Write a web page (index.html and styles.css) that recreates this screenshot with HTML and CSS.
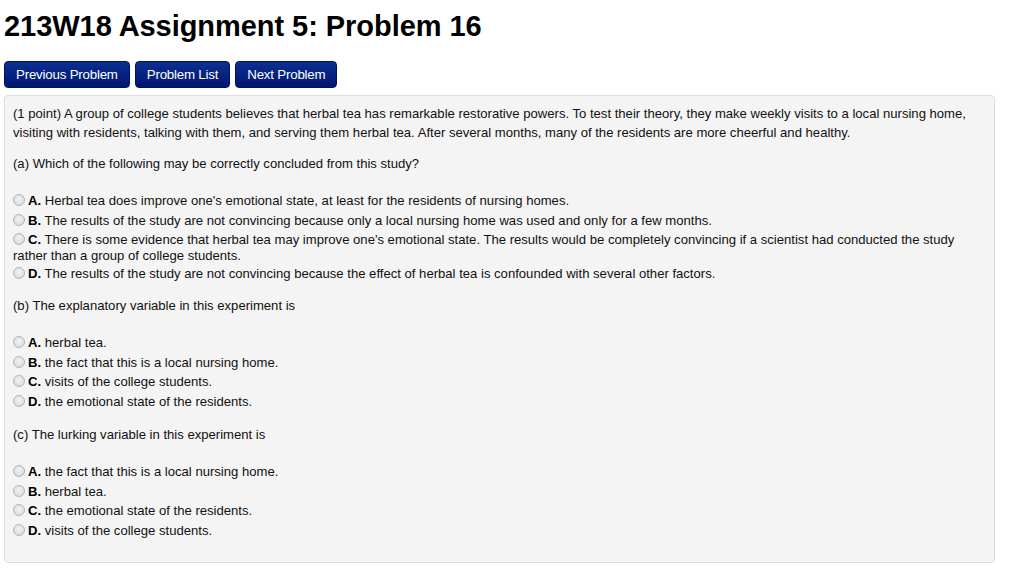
FILE: index.html
```html
<!DOCTYPE html>
<html>
<head>
<meta charset="utf-8">
<link rel="stylesheet" href="styles.css">
</head>
<body>
<h1 class="title">213W18 Assignment 5: Problem 16</h1>
<div class="nav">
  <a class="btn">Previous Problem</a>
  <a class="btn">Problem List</a>
  <a class="btn">Next Problem</a>
</div>
<div class="panel">
  <p class="intro">(1 point) A group of college students believes that herbal tea has remarkable restorative powers. To test their theory, they make weekly visits to a local nursing home, visiting with residents, talking with them, and serving them herbal tea. After several months, many of the residents are more cheerful and healthy.</p>
  <p class="q">(a) Which of the following may be correctly concluded from this study?</p>
  <div class="opts">
    <div class="opt"><span class="radio"></span><b>A.</b> Herbal tea does improve one's emotional state, at least for the residents of nursing homes.</div>
    <div class="opt"><span class="radio"></span><b>B.</b> The results of the study are not convincing because only a local nursing home was used and only for a few months.</div>
    <div class="opt long"><span class="radio"></span><b>C.</b> There is some evidence that herbal tea may improve one's emotional state. The results would be completely convincing if a scientist had conducted the study rather than a group of college students.</div>
    <div class="opt"><span class="radio"></span><b>D.</b> The results of the study are not convincing because the effect of herbal tea is confounded with several other factors.</div>
  </div>
  <p class="q">(b) The explanatory variable in this experiment is</p>
  <div class="opts mid">
    <div class="opt"><span class="radio"></span><b>A.</b> herbal tea.</div>
    <div class="opt"><span class="radio"></span><b>B.</b> the fact that this is a local nursing home.</div>
    <div class="opt"><span class="radio"></span><b>C.</b> visits of the college students.</div>
    <div class="opt"><span class="radio"></span><b>D.</b> the emotional state of the residents.</div>
  </div>
  <p class="q">(c) The lurking variable in this experiment is</p>
  <div class="opts">
    <div class="opt"><span class="radio"></span><b>A.</b> the fact that this is a local nursing home.</div>
    <div class="opt"><span class="radio"></span><b>B.</b> herbal tea.</div>
    <div class="opt"><span class="radio"></span><b>C.</b> the emotional state of the residents.</div>
    <div class="opt"><span class="radio"></span><b>D.</b> visits of the college students.</div>
  </div>
</div>
</body>
</html>
```
FILE: styles.css
```css
html, body {
  margin: 0;
  padding: 0;
  background: #fff;
}
body {
  font-family: "Liberation Sans", Arial, Helvetica, sans-serif;
  color: #111;
  padding: 0 29px 0 4px;
}
.title {
  margin: 0;
  padding-top: 8px;
  font-size: 29px;
  line-height: 36px;
  font-weight: bold;
  color: #000;
  letter-spacing: -0.05px;
}
.nav {
  display: flex;
  gap: 5px;
  margin-top: 17px;
}
.btn {
  display: block;
  height: 25px;
  line-height: 25px;
  padding: 0 11px;
  font-size: 13.3px;
  color: #fff;
  background: linear-gradient(#0b2f92, #011770);
  border: 1px solid #001163;
  border-radius: 4px;
  letter-spacing: -0.2px;
}
.panel {
  margin-top: 7px;
  background: #f4f4f4;
  border: 1px solid #dcdcdc;
  border-radius: 4px;
  padding: 8px 8px 24px 8px;
  font-size: 13.1px;
  color: #111;
  box-sizing: border-box;
  height: 468px;
}
.intro {
  margin: 0;
  line-height: 19px;
}
.q {
  margin: 12px 0 0 0;
  line-height: 19px;
}
.opts {
  margin-top: 16px;
  margin-bottom: 14px;
}
.opts.mid {
  margin-bottom: 15px;
}
.opt {
  line-height: 16px;
  padding-top: 3.75px;
}
.opt.long {
  line-height: 15.5px;
  padding-top: 3.75px;
  margin-bottom: -1px;
}
.opt b {
  color: #000;
}
.radio {
  display: inline-block;
  width: 10px;
  height: 10px;
  border-radius: 50%;
  border: 1px solid #b4b4b4;
  background: radial-gradient(circle at 50% 40%, #f2f2f2, #d6d6d6);
  vertical-align: -1px;
  margin-right: 3px;
  box-sizing: content-box;
}
```
